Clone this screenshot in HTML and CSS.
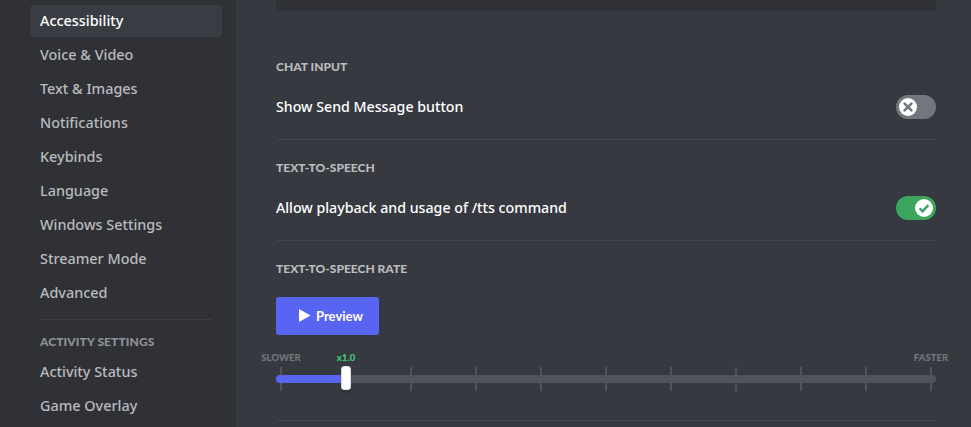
FILE: index.html
```html
<!DOCTYPE html>
<html lang="en">
<head>
<meta charset="utf-8">
<title>Accessibility</title>
<link rel="stylesheet" href="styles.css">
</head>
<body>
<div class="app">
  <nav class="sidebar">
    <a class="item active">Accessibility</a>
    <a class="item">Voice &amp; Video</a>
    <a class="item">Text &amp; Images</a>
    <a class="item">Notifications</a>
    <a class="item">Keybinds</a>
    <a class="item">Language</a>
    <a class="item">Windows Settings</a>
    <a class="item">Streamer Mode</a>
    <a class="item">Advanced</a>
    <div class="sep"></div>
    <div class="nav-head">ACTIVITY SETTINGS</div>
    <a class="item">Activity Status</a>
    <a class="item">Game Overlay</a>
  </nav>
  <main class="content">
    <div class="top-box"></div>
    <section class="group first">
      <h2 class="title">CHAT INPUT</h2>
      <div class="row">
        <span class="label">Show Send Message button</span>
        <span class="switch off">
          <span class="knob">
            <svg viewBox="0 0 18 18" width="18" height="18"><path d="M5.6 5.6l6.8 6.8M12.4 5.6l-6.8 6.8" stroke="#72767d" stroke-width="2.6" stroke-linecap="round" fill="none"/></svg>
          </span>
        </span>
      </div>
    </section>
    <section class="group">
      <h2 class="title">TEXT-TO-SPEECH</h2>
      <div class="row">
        <span class="label">Allow playback and usage of /tts command</span>
        <span class="switch on">
          <span class="knob">
            <svg viewBox="0 0 18 18" width="18" height="18"><path d="M4.6 9.3l3 3 5.8-6.2" stroke="#3ba55d" stroke-width="2.4" fill="none"/></svg>
          </span>
        </span>
      </div>
    </section>
    <section class="group last">
      <h2 class="title">TEXT-TO-SPEECH RATE</h2>
      <button class="preview">
        <svg viewBox="0 0 12 14" width="12" height="14"><path d="M0 0l11.5 6.5L0 13z" fill="#fff"/></svg>
        Preview
      </button>
      <div class="slider">
        <div class="track"><div class="fill"></div></div>
        <div class="ticks">
          <div class="tick"><span class="tick-label">SLOWER</span></div>
          <div class="tick"><span class="tick-label current">x1.0</span><span class="thumb"></span></div>
          <div class="tick"></div>
          <div class="tick"></div>
          <div class="tick"></div>
          <div class="tick"></div>
          <div class="tick"></div>
          <div class="tick"></div>
          <div class="tick"></div>
          <div class="tick"></div>
          <div class="tick"><span class="tick-label">FASTER</span></div>
        </div>
      </div>
    </section>
  </main>
</div>
</body>
</html>
```
FILE: styles.css
```css
* { box-sizing: border-box; }
html, body { margin: 0; height: 100%; overflow: hidden; }
body { background: #36393f; font-family: "Lato", sans-serif; }
.app { display: flex; height: 427px; overflow: hidden; }
.sidebar {
  width: 236px; flex: none; background: #2f3136;
  padding: 5px 14px 0 30px; display: flex; flex-direction: column;
}
.item {
  display: flex; align-items: center; height: 32px; flex: none;
  margin-bottom: 2px; padding: 0 10px 2px; border-radius: 4px;
  color: #b9bbbe; font-family: "Noto Sans", sans-serif; font-size: 14.4px; font-weight: 500;
}
.item.active { background: #393c43; color: #fff; }
.sep { height: 1px; background: #3b3e44; margin: 8px 10px 0; flex: none; }
.nav-head {
  padding: 0 10px; margin-top: 14px; height: 16px; line-height: 16px; margin-bottom: 6px;
  font-size: 12px; font-weight: 900; color: #8e9297; letter-spacing: .1px;
}
.content { flex: 1; padding: 0 35px 0 40px; min-width: 0; }
.top-box { height: 11px; background: #2f3136; border-radius: 0 0 3px 3px; }
.group { border-bottom: 1px solid #42454a; height: 101px; padding-top: 20px; }
.group.first { margin-top: 36px; height: 93px; padding-top: 12px; }
.title {
  margin: 0; font-size: 12px; line-height: 16px; font-weight: 900; color: #b9bbbe;
}
.row { display: flex; justify-content: space-between; align-items: center; margin-top: 20px; height: 24px; }
.label { color: #fff; font-family: "Noto Sans", sans-serif; font-size: 14.2px; font-weight: 500; margin-top: -2px; }
.switch { display: flex; width: 40px; height: 24px; border-radius: 12px; padding: 3px; }
.switch.off { background: #72767d; }
.switch.on { background: #3ba55d; justify-content: flex-end; }
.knob { width: 18px; height: 18px; border-radius: 50%; background: #fff; display: block; }
.knob svg { display: block; }
.group.last { height: 180px; }
.preview {
  display: flex; align-items: center; justify-content: flex-start; gap: 5px;
  width: 103px; height: 38px; margin-top: 20px; padding: 0 0 0 23px;
  border: 0; border-radius: 3px; background: #5865f2; color: #fff;
  font-family: inherit; font-size: 13px; font-weight: 700;
}
.preview svg { display: block; }
.slider { position: relative; height: 24px; margin-top: 32px; }
.track { position: absolute; z-index: 1; left: 0; right: 0; top: 8px; height: 8px; border-radius: 4px; background: #4f545c; overflow: hidden; }
.fill { width: 70px; height: 100%; background: #5865f2; }
.ticks { position: absolute; inset: 0; display: flex; justify-content: space-between; padding: 0 4px; }
.tick { position: relative; width: 2px; height: 24px; background: #4f545c; }
.tick-label {
  position: absolute; bottom: 27px; left: 50%; transform: translateX(-50%);
  font-size: 9.6px; line-height: 13px; font-weight: 900; color: #72767d; white-space: nowrap;
}
.tick-label.current { color: #43c77a; }
.thumb {
  position: absolute; z-index: 2; left: -4px; top: -1px; width: 10px; height: 24px;
  background: #fff; border: 1px solid #dcddde; border-radius: 3px;
  box-shadow: 0 3px 1px rgba(0,0,0,.15);
}
```
